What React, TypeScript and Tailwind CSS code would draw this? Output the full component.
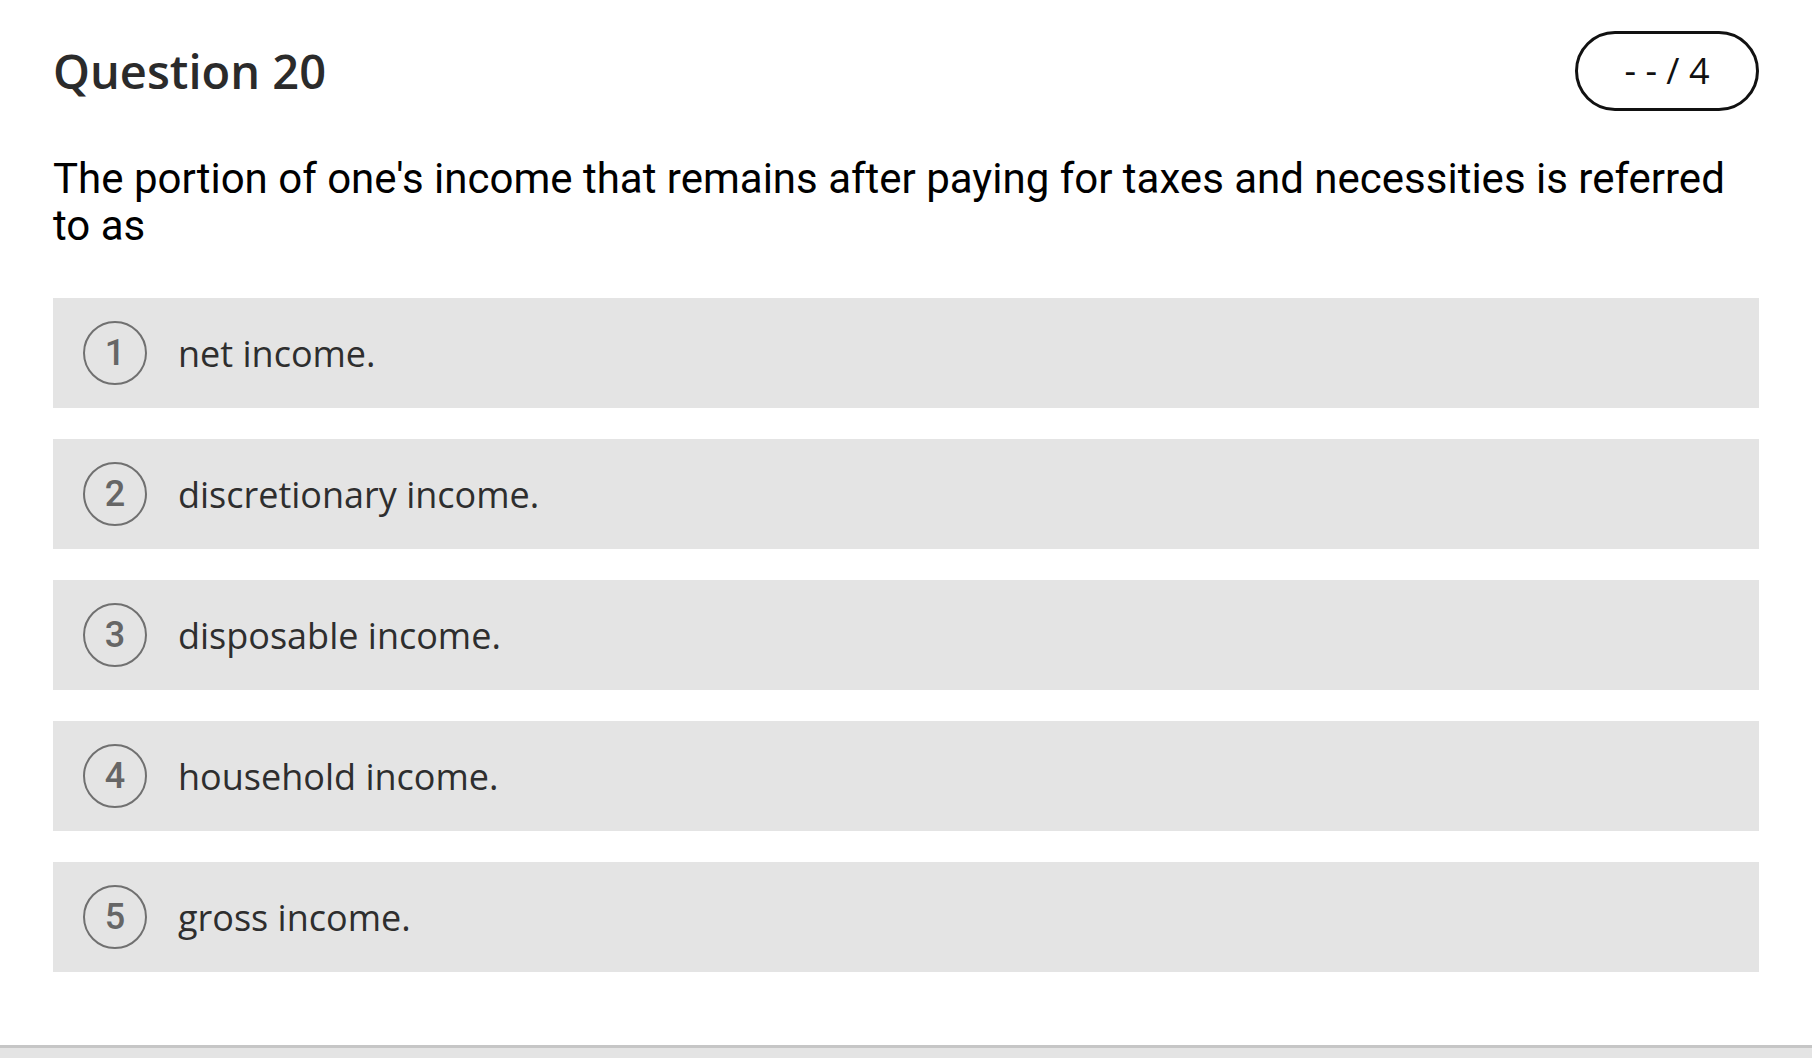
import React from "react";

const options = [
  "net income.",
  "discretionary income.",
  "disposable income.",
  "household income.",
  "gross income.",
];

export default function App() {
  return (
    <div className="w-[1812px] h-[1058px] bg-white flex flex-col overflow-hidden">
      <div className="flex-1 px-[53px] pt-[31px]">
        <div className="flex items-center justify-between">
          <h1
            className="text-[47px] leading-[60px] font-semibold text-[#2b2b2b]"
            style={{ fontFamily: '"Open Sans", sans-serif' }}
          >
            Question 20
          </h1>
          <div
            className="w-[184px] h-[80px] rounded-full border-[3px] border-[#111] flex items-center justify-center text-[36px] font-medium text-[#111]"
            style={{ fontFamily: '"Open Sans", sans-serif' }}
          >
            - - / 4
          </div>
        </div>
        <p
          className="mt-[44px] text-[42px] leading-[47px] text-black"
          style={{ fontFamily: "Roboto, sans-serif" }}
        >
          The portion of one's income that remains after paying for taxes and necessities is referred to as
        </p>
        <div className="mt-[49px] flex flex-col gap-[31px]">
          {options.map((o, i) => (
            <div
              key={i}
              className="h-[110px] bg-[#e4e4e4] flex items-center pl-[30px]"
            >
              <div
                className="w-[64px] h-[64px] rounded-full border-2 border-[#707070] flex items-center justify-center text-[36px] font-medium text-[#666] shrink-0"
                style={{ fontFamily: "Roboto, sans-serif" }}
              >
                {i + 1}
              </div>
              <span
                className="ml-[31px] text-[36px] text-[#2e2e2e] pt-[2px]"
                style={{ fontFamily: '"Open Sans", sans-serif' }}
              >
                {o}
              </span>
            </div>
          ))}
        </div>
      </div>
      <div className="h-[13px] bg-[#e4e4e4] border-t-[3px] border-[#c6c6c6]" />
    </div>
  );
}
